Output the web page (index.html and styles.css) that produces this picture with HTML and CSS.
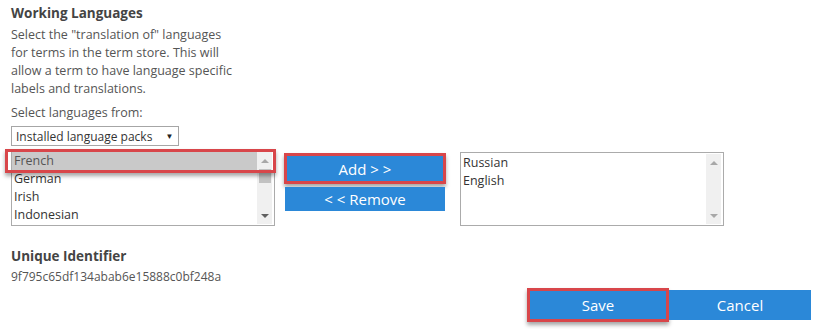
FILE: index.html
```html
<html>
    <head>
        <meta charset="UTF-8" name="viewport" content="width=device-width, initial-scale=1.0">
        <link rel="stylesheet" href="styles.css">
    </head>
    <body>
        <div class="panel">
            <h3 class="tittel">Working Languages</h3>
            <p class="beskrivelse">Select the "translation of" languages for terms in the term store. This will allow a term to have language specific labels and translations.</p>
            <p class="fra">Select languages from:</p>
            <div class="nedtrekk">Installed language packs <span class="pil">&#9660;</span></div>

            <div class="rad">
                <div class="liste venstre">
                    <div class="elementer">
                        <div class="element valgt">French</div>
                        <div class="element">German</div>
                        <div class="element">Irish</div>
                        <div class="element">Indonesian</div>
                    </div>
                    <div class="rullefelt">
                        <span class="opp"></span>
                        <span class="tommel"></span>
                        <span class="ned"></span>
                    </div>
                    <div class="markering"></div>
                </div>

                <div class="knapper">
                    <button class="knapp markert" id="leggTil">Add &gt; &gt;</button>
                    <button class="knapp" id="fjern">&lt; &lt; Remove</button>
                </div>

                <div class="liste hoyre">
                    <div class="elementer">
                        <div class="element">Russian</div>
                        <div class="element">English</div>
                    </div>
                    <div class="rullefelt">
                        <span class="opp"></span>
                        <span class="ned"></span>
                    </div>
                </div>
            </div>

            <h3 class="tittel id-tittel">Unique Identifier</h3>
            <p class="guid">9f795c65df134abab6e15888c0bf248a</p>
        </div>

        <div class="bunn">
            <button class="knapp stor markert" id="lagre">Save</button>
            <button class="knapp stor" id="avbryt">Cancel</button>
        </div>
    </body>
</html>
```

FILE: styles.css
```css
html {
    background: white;
}

body {
    margin: 0;
    font-family: "Open Sans", "Noto Sans", sans-serif;
    color: #444;
}

.panel {
    padding: 4px 9px 0 11px;
}

.tittel {
    margin: 0;
    font-size: 13.5px;
    line-height: 18px;
    font-weight: bold;
    color: #444;
}

.beskrivelse {
    margin: 4px 0 0 0;
    width: 224px;
    font-size: 12.5px;
    line-height: 18px;
    color: #555;
}

.fra {
    margin: 6px 0 0 0;
    font-size: 12.5px;
    line-height: 18px;
    color: #555;
}

.nedtrekk {
    margin-top: 4px;
    box-sizing: border-box;
    width: 168px;
    height: 20px;
    border: 1px solid #a6a6a6;
    padding-left: 4px;
    font-size: 12px;
    line-height: 18px;
    color: #333;
}

.pil {
    font-size: 8px;
    margin-left: 10px;
    vertical-align: 2px;
    color: #222;
}

.rad {
    display: flex;
    align-items: flex-start;
    margin-top: 4px;
}

.liste {
    position: relative;
    display: flex;
    box-sizing: border-box;
    width: 264px;
    height: 76px;
    border: 1px solid #ababab;
    background: white;
}

.hoyre {
    margin-top: 2px;
    margin-left: 14px;
    height: 74px;
}

.elementer {
    flex: 1;
    padding-top: 1px;
}

.element {
    height: 18px;
    line-height: 18px;
    padding-left: 2px;
    font-size: 12.5px;
    color: #333;
}

.valgt {
    background: #c9c9c9;
    color: #555;
}

.rullefelt {
    display: flex;
    flex-direction: column;
    align-items: center;
    width: 15px;
    margin: 1px 2px 1px 0;
    background: #f0f0f0;
}

.opp,
.ned {
    width: 0;
    height: 0;
    border-left: 4px solid transparent;
    border-right: 4px solid transparent;
}

.opp {
    margin-top: 7px;
    border-bottom: 4px solid #a8a8a8;
}

.ned {
    margin-top: auto;
    margin-bottom: 6px;
    border-top: 4px solid #606060;
}

.hoyre .ned {
    border-top-color: #a8a8a8;
}

.tommel {
    width: 12px;
    height: 14px;
    margin-top: 6px;
    background: #c2c2c2;
}

.markering {
    position: absolute;
    left: -7px;
    top: -2px;
    width: 271px;
    height: 24px;
    box-sizing: border-box;
    border: 3px solid #d8464a;
    box-shadow: 0 3px 4px rgba(0, 0, 0, 0.35);
}

.knapper {
    display: flex;
    flex-direction: column;
    margin-left: 10px;
    margin-top: 3px;
}

.knapp {
    box-sizing: border-box;
    border: none;
    background-color: #2b88d8;
    color: white;
    font-family: "Open Sans", "Noto Sans", sans-serif;
    font-size: 15px;
    padding: 0;
}

#leggTil {
    width: 162px;
    margin-left: -1px;
    height: 31px;
}

#fjern {
    width: 160px;
    height: 24px;
    margin-top: 3px;
}

.markert {
    border: 3px solid #d8464a;
    box-shadow: 0 3px 4px rgba(0, 0, 0, 0.35);
}

.id-tittel {
    margin-top: 21px;
}

.guid {
    margin: 3px 0 0 0;
    font-size: 12px;
    line-height: 18px;
    color: #555;
}

.bunn {
    display: flex;
    justify-content: flex-end;
    align-items: center;
    margin-top: 2px;
    padding-right: 9px;
}

.stor {
    width: 142px;
    height: 30px;
    font-size: 15px;
}

#lagre {
    height: 34px;
}
```
